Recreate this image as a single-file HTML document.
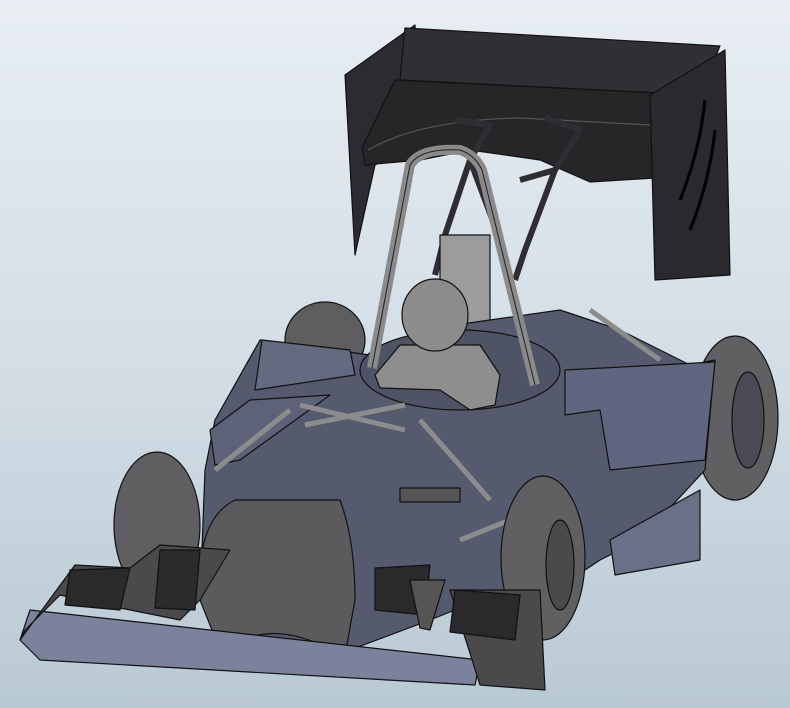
<!DOCTYPE html>
<html><head><style>
html,body{margin:0;padding:0;width:790px;height:708px;overflow:hidden;}
body{background:linear-gradient(#e8eef3,#d4dee6 50%,#b9c9d4);}
svg{position:absolute;left:0;top:0;}
</style></head><body>
<svg width="790" height="708" viewBox="0 0 790 708" stroke="#111" stroke-width="1.2" stroke-linejoin="round">
<!-- rear wing -->
<polygon points="345,75 415,25 420,140 375,165 355,255" fill="#2c2c30"/>
<polygon points="405,28 720,46 700,95 400,80" fill="#303034"/>
<polygon points="395,80 700,95 655,100 655,178 590,182 540,160 470,150 420,160 365,165 362,148" fill="#262629"/>
<path d="M368,150 Q420,120 520,118 L650,125" fill="none" stroke="#555"/>
<polygon points="650,95 725,50 730,275 655,280" fill="#2a2a2e"/>
<path d="M680,200 Q700,150 705,100 M690,230 Q710,180 715,130" fill="none" stroke="#000" stroke-width="3"/>
<!-- wing supports (lattice) -->
<path d="M455,120 L490,125 L470,160 L445,235 L435,275 M470,160 L500,240 M545,118 L580,130 L555,170 L525,250 L515,280 M555,170 L520,180" fill="none" stroke="#2e2e32" stroke-width="6"/>
<!-- rear tires -->
<ellipse cx="325" cy="340" rx="40" ry="38" fill="#5e5e60"/>
<ellipse cx="735" cy="418" rx="43" ry="82" fill="#606062"/>
<ellipse cx="748" cy="420" rx="16" ry="48" fill="#4a4a55"/>
<!-- headrest -->
<rect x="440" y="235" width="50" height="95" fill="#9c9c9c"/>
<!-- body -->
<polygon points="205,470 215,420 260,340 370,355 420,330 560,310 620,330 690,365 715,360 705,470 640,540 600,560 540,600 480,600 430,620 350,650 250,640 200,600" fill="#555a6e"/>
<polygon points="262,340 350,350 355,375 255,390" fill="#646a80"/>
<polygon points="565,370 715,362 705,460 610,470 600,410 565,415" fill="#606680"/>
<polygon points="210,430 250,400 330,395 240,460 215,465" fill="#5d6278"/>
<ellipse cx="460" cy="370" rx="100" ry="40" fill="#4e5366"/>
<!-- seat -->
<path d="M375,375 L400,345 L480,345 L500,375 L495,405 L470,410 L440,390 L380,388 Z" fill="#8e8e8e"/>
<!-- helmet -->
<ellipse cx="435" cy="315" rx="33" ry="36" fill="#8c8c8c"/>
<!-- roll hoop -->
<path d="M372,368 L410,165 Q420,148 460,150 Q475,155 482,170 L535,385" fill="none" stroke="#8a8a8a" stroke-width="10"/>
<path d="M372,368 L410,165 Q420,148 460,150 Q475,155 482,170 L535,385" fill="none" stroke="#222" stroke-width="1"/>
<!-- suspension -->
<path d="M215,470 L290,410 M300,405 L405,430 M305,425 L405,405 M420,420 L490,500 M460,540 L560,500 M590,310 L660,360" stroke="#8c8c8c" stroke-width="5" fill="none"/>
<!-- nose -->
<path d="M200,600 Q195,520 235,500 L340,500 Q355,540 355,600 L345,655 L320,645 Q280,625 240,640 L220,650 Z" fill="#5b5b5d"/>
<rect x="400" y="488" width="60" height="14" fill="#555" />
<!-- front tires -->
<ellipse cx="157" cy="525" rx="43" ry="73" fill="#5f5f61"/>
<ellipse cx="543" cy="558" rx="42" ry="82" fill="#606062"/>
<ellipse cx="560" cy="565" rx="14" ry="45" fill="#4a4a4a"/>
<!-- front wing -->
<polygon points="20,640 30,610 480,660 475,685 40,660" fill="#7c829c"/>
<polygon points="20,640 75,565 130,568 160,545 230,550 200,600 180,620 105,605 60,595 25,630" fill="#4a4a4c"/>
<polygon points="70,570 130,568 120,610 65,605" fill="#2a2a2c"/>
<polygon points="160,550 200,550 195,610 155,608" fill="#2b2b2d"/>
<polygon points="375,568 430,565 425,615 375,610" fill="#2a2a2c"/>
<polygon points="450,590 540,590 545,690 480,685" fill="#4a4a4c"/>
<polygon points="455,590 520,595 515,640 450,632" fill="#2a2a2c"/>
<polygon points="410,580 445,580 430,630 420,628" fill="#555"/>
<polygon points="610,540 700,490 700,560 615,575" fill="#6a7088"/>
</svg>
</body></html>
